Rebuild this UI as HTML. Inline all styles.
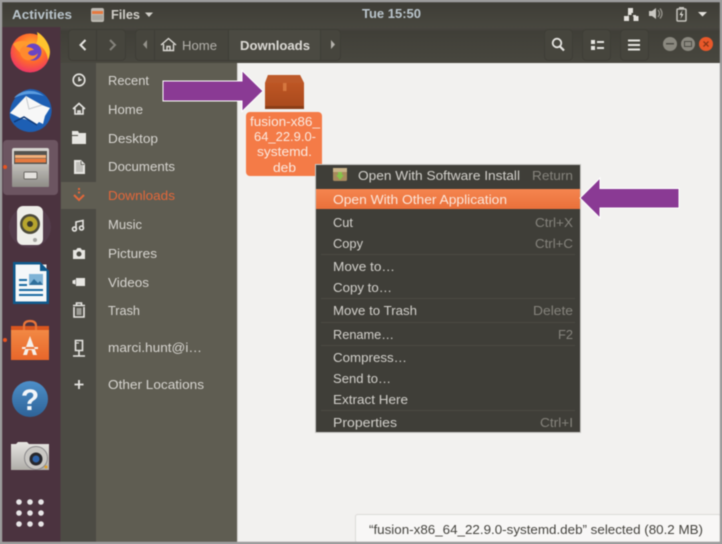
<!DOCTYPE html>
<html><head><meta charset="utf-8"><style>
html,body{margin:0;padding:0;width:722px;height:544px;overflow:hidden;background:#9c9c9c}
svg{display:block;filter:blur(.45px)}
text{font-family:"Liberation Sans",sans-serif;font-size:13px}
.s{fill:#d6d4cf}.m{fill:#d2d0cb}.k{fill:#85837c}
.i{fill:#e6e5e1;stroke:none}.l{fill:none;stroke:#e6e5e1;stroke-width:1.600}
</style></head><body>
<svg width="722" height="544" viewBox="0 0 722 544" xmlns="http://www.w3.org/2000/svg">
<defs>
<linearGradient id="top" x1="0" y1="0" x2="0" y2="1"><stop offset="0" stop-color="#3e3d36"/><stop offset=".42" stop-color="#48473f"/><stop offset=".48" stop-color="#403f38"/><stop offset="1" stop-color="#48473f"/></linearGradient>
<linearGradient id="hl" x1="0" y1="0" x2="0" y2="1"><stop offset="0" stop-color="#f5854f"/><stop offset="1" stop-color="#e9703a"/></linearGradient>
<linearGradient id="box" x1="0" y1="0" x2="0" y2="1"><stop offset="0" stop-color="#c45a26"/><stop offset="1" stop-color="#a8491d"/></linearGradient>
<radialGradient id="ff" cx=".55" cy=".35" r=".75"><stop offset="0" stop-color="#ffbd2e"/><stop offset=".5" stop-color="#ff6a2b"/><stop offset="1" stop-color="#e8257a"/></radialGradient>
<linearGradient id="bl" x1="0" y1="0" x2="0" y2="1"><stop offset="0" stop-color="#4d8fc9"/><stop offset="1" stop-color="#2e6398"/></linearGradient>
<linearGradient id="org" x1="0" y1="0" x2="0" y2="1"><stop offset="0" stop-color="#f28a45"/><stop offset="1" stop-color="#e8662a"/></linearGradient>
<linearGradient id="gr" x1="0" y1="0" x2="0" y2="1"><stop offset="0" stop-color="#e8e6e2"/><stop offset="1" stop-color="#b0aea8"/></linearGradient>
<linearGradient id="dr" x1="0" y1="0" x2="0" y2="1"><stop offset="0" stop-color="#c2c0bb"/><stop offset="1" stop-color="#8e8c87"/></linearGradient>
</defs>

<rect width="722" height="544" fill="#9c9c9c"/>
<rect x="2" y="2" width="718" height="540" fill="#f2f1ef"/>

<rect x="2" y="2" width="718" height="61" fill="url(#top)"/>
<text x="12" y="19" fill="#b9c4cb" textLength="60" lengthAdjust="spacingAndGlyphs" font-weight="bold">Activities</text>
<rect x="91" y="8" width="13" height="14" rx="2" fill="#bdbab3"/><rect x="92" y="11" width="11" height="3" fill="#e5793f"/><rect x="92" y="15" width="11" height="5" fill="#a8a59e"/>
<text x="111" y="19" fill="#d0cec8" textLength="29" lengthAdjust="spacingAndGlyphs" font-weight="bold">Files</text>
<path d="M145 12.500h8l-4 4.500z" fill="#d0cec8"/>
<text x="362" y="18" fill="#b9c4cb" textLength="59" lengthAdjust="spacingAndGlyphs" font-weight="bold">Tue 15:50</text>
<!-- tray -->
<path d="M628 8h5v5h-1.500v2H636v1.500h-3V15h-4.500v1.500H628V15h-0v-2zM624 16h5v5h-5zM633.500 16h5v5h-5z" fill="#e3e1dc"/>
<path d="M649 11h3l4-3v11l-4-3h-3z" fill="#c9c7c1"/><path d="M658 10q3 3.500 0 7M660 8.500q4 5 0 10" fill="none" stroke="#9a9890" stroke-width="1.200"/>
<rect x="677" y="9" width="9" height="12" rx="1" fill="none" stroke="#c5c3bd" stroke-width="1.500"/><rect x="679" y="7" width="5" height="2" fill="#c5c3bd"/><path d="M682.500 10l-3 5h2l-1 4 3-5h-2z" fill="#e3e1dc"/>
<path d="M698 12h9l-4.500 4.500z" fill="#e3e1dc"/>

<!-- nav buttons -->
<g stroke="#3e3d36" fill="#46453d">
<rect x="68.500" y="29.500" width="57" height="31" rx="4"/>
<rect x="135.500" y="29.500" width="205" height="31" rx="4"/>
<rect x="544.500" y="29.500" width="28" height="31" rx="4"/>
<rect x="582.500" y="29.500" width="28" height="31" rx="4"/>
<rect x="620.500" y="29.500" width="28" height="31" rx="4"/>
</g>
<path d="M96.500 30v30M154.500 30v30" stroke="#3e3d36"/>
<rect x="229" y="30" width="92" height="30" fill="#4b4a42"/><path d="M228.500 30v30M320.500 30v30" stroke="#3e3d36"/>
<path d="M85.500 40l-5 5 5 5" fill="none" stroke="#e6e5e1" stroke-width="2"/>
<path d="M110 40l5 5-5 5" fill="none" stroke="#84827b" stroke-width="2"/>
<path d="M147 40v9l-4-4.500z" fill="#94928b"/>
<path d="M331 40v9l4-4.500z" fill="#b5b3ad"/>
<path d="M161 45l7.500-6.500 7.500 6.500M163.500 44v6.500h10V44M167 50.500v-4h3v4" fill="none" stroke="#dbd9d4" stroke-width="1.400"/>
<text x="182" y="50" fill="#b3b1ab" textLength="35" lengthAdjust="spacingAndGlyphs">Home</text>
<text x="240" y="50" fill="#dcdad5" textLength="70" lengthAdjust="spacingAndGlyphs" font-weight="bold">Downloads</text>
<circle cx="557" cy="43" r="4.300" fill="none" stroke="#e6e5e1" stroke-width="1.800"/><path d="M560 46.500l4 4" stroke="#e6e5e1" stroke-width="2.200"/>
<path d="M591 40h4v4h-4zM591 46h4v4h-4zM597 41h7v2h-7zM597 47h7v2h-7z" fill="#e6e5e1"/>
<path d="M628 39.500h12v2h-12zM628 44h12v2h-12zM628 48.500h12v2h-12z" fill="#e6e5e1"/>
<circle cx="670" cy="44" r="7" fill="#8a887f"/><rect x="666" y="43" width="8" height="1.500" fill="#4d4c45"/>
<circle cx="688" cy="44" r="7" fill="#8a887f"/><rect x="684.500" y="41.500" width="7" height="5" fill="none" stroke="#4d4c45"/>
<circle cx="706" cy="44" r="7" fill="#e8582a"/><path d="M703.500 41.500l5 5M708.500 41.500l-5 5" stroke="#8a3515" stroke-width="1.300"/>

<!-- dock -->
<rect x="2" y="27" width="58.500" height="515" fill="#4b333f"/>
<rect x="3" y="140" width="55" height="55" rx="4" fill="#6c5561"/>
<circle cx="5" cy="167" r="2" fill="#e95420"/><circle cx="5" cy="340" r="2" fill="#e95420"/>

<!-- firefox -->
<circle cx="30" cy="53" r="19.500" fill="url(#ff)"/>
<path d="M37 32c6 3 13 12 13 20 0 3-1 6-2 8-1-8-5-14-12-16 2-4 2-8 1-12z" fill="#ffc42e"/>
<path d="M13 44c5-4 12-4 17-1-4 1-7 2-8 5 5-2 12 0 13 4-4-1-9 0-13 2-3-2-6-5-9-10z" fill="#ff9a2e"/>
<circle cx="33" cy="52" r="8.500" fill="#6a45c4"/>
<path d="M21 48c5-2 11-1 13 2-3 0-5 1-6 3 2 4 8 3 10 0-1 6-9 9-14 6-4-3-5-8-3-11z" fill="#ff8a2e"/>

<!-- thunderbird -->
<path d="M30 89a21.500 21.500 0 1 1-20 29c-2-12 6-27 20-29z" fill="#1d5fb4"/>
<path d="M14 98c6-8 20-10 30-2-9-3-20-3-30 2z" fill="#5b9ce0"/>
<path d="M10 113l16-17 16 9 8 3-5 8-2 8-4-2-3 3-8-5-8-2z" fill="#f7f7f7"/>
<path d="M26 96l3 13 13-4" fill="none" stroke="#c5c8cc" stroke-width="1"/>
<path d="M14 122l10-5 13 8" fill="none" stroke="#0f3a78" stroke-width="1.500"/>

<!-- files drawer -->
<rect x="12" y="148" width="37" height="39" rx="2" fill="#d6d4d0"/>
<rect x="14" y="151" width="33" height="14" fill="#55534e"/>
<rect x="15" y="155" width="31" height="3" fill="#f3b07a"/><rect x="15" y="158.500" width="31" height="4" fill="#e5793f"/>
<rect x="12" y="164" width="37" height="23" rx="1" fill="url(#dr)"/>
<rect x="24" y="172" width="13" height="7" rx="1" fill="#e4e2de" stroke="#6a6863"/>

<!-- speakers -->
<circle cx="30" cy="227" r="21" fill="#5f4a60" opacity=".4"/>
<rect x="17" y="206" width="26" height="39" rx="6" fill="#eeeee9"/>
<circle cx="30" cy="224" r="10" fill="#4c4a3a"/><circle cx="30" cy="224" r="7.500" fill="#b7a52e"/><circle cx="30" cy="224" r="3" fill="#3a3828"/>
<circle cx="35" cy="240" r="2" fill="#a5a5a0"/>

<!-- writer -->
<path d="M13 262h27l9 9v33H13z" fill="#0f5a8d"/>
<rect x="15.500" y="264.500" width="31" height="37" fill="#f4f7f9"/>
<path d="M40 262l9 9h-9z" fill="#0f5a8d"/>
<path d="M19 279h8v2h-8zM19 284h8v2h-8zM19 289h24v2h-24zM19 294h24v2h-24z" fill="#1a6aa3"/>
<rect x="29" y="274" width="14" height="11" fill="#7fb3d6"/><path d="M29 285l5-6 4 4 2-2 3 4z" fill="#2f6f9c"/>

<!-- store -->
<rect x="11" y="329" width="38" height="31" fill="url(#org)"/>
<rect x="11" y="326" width="38" height="4" fill="#d9561f"/>
<path d="M24 330v-4q0-5 6-5t6 5v4" fill="none" stroke="#e9753a" stroke-width="2.200"/>
<path d="M30 336l-7 19h4l1.500-5h3l1.500 5h4zM22 347h16v2H22z" fill="#f6f0ea"/>

<!-- help -->
<circle cx="30" cy="399" r="18" fill="url(#bl)"/>
<text x="30" y="410" text-anchor="middle" fill="#f3f6f9" font-weight="bold" style="font-size:30px">?</text>

<!-- camera -->
<path d="M11 444h5l2-2h9l2 2h20v26H11z" fill="url(#gr)"/>
<circle cx="36" cy="458" r="11.500" fill="#c9c7c3" stroke="#8a888a"/><circle cx="36" cy="459" r="6.500" fill="#27272c"/><circle cx="36" cy="459" r="3.500" fill="#2d62a8"/>
<circle cx="46" cy="467" r="1.500" fill="#e3a126"/>

<!-- grid -->
<g fill="#e7e5e6">
<circle cx="19" cy="502" r="2.800"/><circle cx="30" cy="502" r="2.800"/><circle cx="41" cy="502" r="2.800"/>
<circle cx="19" cy="513" r="2.800"/><circle cx="30" cy="513" r="2.800"/><circle cx="41" cy="513" r="2.800"/>
<circle cx="19" cy="524" r="2.800"/><circle cx="30" cy="524" r="2.800"/><circle cx="41" cy="524" r="2.800"/>
</g>

<!-- sidebar -->
<rect x="60.500" y="63" width="36" height="479" fill="#4c4b44"/>
<rect x="96" y="63" width="141" height="479" fill="#5f5d52"/>
<rect x="237" y="63" width="1" height="479" fill="#d8d7d3"/>
<rect x="61" y="182" width="176" height="27" fill="#5f5d52"/>

<text class="s" x="108" y="85" textLength="41" lengthAdjust="spacingAndGlyphs">Recent</text>
<text class="s" x="108" y="114" textLength="35" lengthAdjust="spacingAndGlyphs">Home</text>
<text class="s" x="108" y="143" textLength="50" lengthAdjust="spacingAndGlyphs">Desktop</text>
<text class="s" x="108" y="171" textLength="67" lengthAdjust="spacingAndGlyphs">Documents</text>
<text x="108" y="200" fill="#e2673a" textLength="67" lengthAdjust="spacingAndGlyphs">Downloads</text>
<text class="s" x="108" y="229" textLength="34" lengthAdjust="spacingAndGlyphs">Music</text>
<text class="s" x="108" y="258" textLength="49" lengthAdjust="spacingAndGlyphs">Pictures</text>
<text class="s" x="108" y="287" textLength="41" lengthAdjust="spacingAndGlyphs">Videos</text>
<text class="s" x="108" y="315" textLength="32" lengthAdjust="spacingAndGlyphs">Trash</text>
<text class="s" x="108" y="352" textLength="94" lengthAdjust="spacingAndGlyphs">marci.hunt@i…</text>
<text class="s" x="108" y="389" textLength="96" lengthAdjust="spacingAndGlyphs">Other Locations</text>

<!-- sidebar icons -->
<circle class="l" cx="79" cy="80" r="5.800"/><path class="l" d="M79 77v3.500l2.500-1"/>
<path class="l" d="M73 109l6-5.500 6 5.500M75 108v6h8v-6M78 114v-3h2v3"/>
<path class="i" d="M72 131h6l1 2h7v11H72z"/><path d="M72 135.500h6" stroke="#4c4b44"/>
<path class="i" d="M74 160h7l4 4v10H74z"/><path d="M76 162h4v3h3v7h-7z" fill="#4c4b44" opacity=".25"/><path d="M81 161v3.500h3.500" fill="none" stroke="#4c4b44" stroke-width=".8"/>
<path d="M79 188v2M79 191.500v2M74 195l5 5 5-5" fill="none" stroke="#e2673a" stroke-width="2"/>
<path class="l" d="M76 229v-7l7-1.500v7"/><circle class="l" cx="74.500" cy="229" r="2"/><circle class="l" cx="81.500" cy="228" r="2"/>
<path class="i" d="M73 250h3l1.500-2h3l1.500 2h3v9H73z"/><circle cx="79" cy="254" r="2.500" fill="#4c4b44"/>
<path class="i" d="M76 278h9v8h-9zM72.500 280.500l3-1v5l-3-1z"/>
<path class="l" d="M74 307v10h10v-10M73 305.500h12M76.500 305v-2h5v2"/><rect x="76.500" y="308" width="5" height="7" fill="#9c9b95"/>
<path class="l" d="M75.500 340.500h7v10h-7zM73 356h12M79 350.500v5"/><path d="M76 343h3" stroke="#e6e5e1"/>
<path d="M79 380v9M74.500 384.500h9" stroke="#e6e5e1" stroke-width="1.800"/>

<!-- file icon + label -->
<rect x="246" y="112" width="76" height="64" rx="4" fill="#f47b47"/>
<path d="M268 75h32l4 8v25h-39V83z" fill="url(#box)"/>
<path d="M268 75h32l4 8h-39z" fill="#bd5a2a"/>
<rect x="283" y="83" width="3.500" height="8" fill="#d5773f"/>
<rect x="265" y="106" width="39" height="3" fill="#8a3d17"/>
<g fill="#fbe9df">
<text x="250" y="126" textLength="70" lengthAdjust="spacingAndGlyphs">fusion-x86_</text>
<text x="254" y="141" textLength="62" lengthAdjust="spacingAndGlyphs">64_22.9.0-</text>
<text x="257" y="156" textLength="55" lengthAdjust="spacingAndGlyphs">systemd.</text>
<text x="273" y="172" textLength="23" lengthAdjust="spacingAndGlyphs">deb</text>
</g>

<!-- menu -->
<rect x="315.500" y="164.500" width="265" height="268" fill="#3f3e38" stroke="#c9c8c4"/>
<rect x="316" y="189" width="264" height="20" fill="url(#hl)"/>
<path d="M321 254.500h254M321 298.500h254M321 322.500h254M321 345.500h254M321 410.500h254" stroke="#4b4a43"/>
<rect x="333" y="168" width="14" height="13" rx="1.500" fill="#a88a5e"/><rect x="333" y="168" width="14" height="4" fill="#cbb48a"/><path d="M338 172h4v3h2l-4 5-4-5h2z" fill="#86c24a"/>
<text class="m" x="358" y="180" textLength="162" lengthAdjust="spacingAndGlyphs">Open With Software Install</text>
<text class="k" x="532" y="180" textLength="41" lengthAdjust="spacingAndGlyphs">Return</text>
<text x="333" y="204" fill="#fbe6da" textLength="174" lengthAdjust="spacingAndGlyphs">Open With Other Application</text>
<text class="m" x="333" y="227" textLength="20" lengthAdjust="spacingAndGlyphs">Cut</text>
<text class="k" x="535" y="227" textLength="38" lengthAdjust="spacingAndGlyphs">Ctrl+X</text>
<text class="m" x="333" y="248" textLength="30" lengthAdjust="spacingAndGlyphs">Copy</text>
<text class="k" x="535" y="248" textLength="38" lengthAdjust="spacingAndGlyphs">Ctrl+C</text>
<text class="m" x="333" y="271" textLength="62" lengthAdjust="spacingAndGlyphs">Move to…</text>
<text class="m" x="333" y="292" textLength="59" lengthAdjust="spacingAndGlyphs">Copy to…</text>
<text class="m" x="333" y="315" textLength="84" lengthAdjust="spacingAndGlyphs">Move to Trash</text>
<text class="k" x="533" y="315" textLength="40" lengthAdjust="spacingAndGlyphs">Delete</text>
<text class="m" x="333" y="339" textLength="61" lengthAdjust="spacingAndGlyphs">Rename…</text>
<text class="k" x="558" y="339" textLength="15" lengthAdjust="spacingAndGlyphs">F2</text>
<text class="m" x="333" y="362" textLength="74" lengthAdjust="spacingAndGlyphs">Compress…</text>
<text class="m" x="333" y="383" textLength="58" lengthAdjust="spacingAndGlyphs">Send to…</text>
<text class="m" x="333" y="404" textLength="75" lengthAdjust="spacingAndGlyphs">Extract Here</text>
<text class="m" x="333" y="427" textLength="64" lengthAdjust="spacingAndGlyphs">Properties</text>
<text class="k" x="540" y="427" textLength="33" lengthAdjust="spacingAndGlyphs">Ctrl+I</text>

<!-- arrows -->
<path d="M163 81h79V70.500L263 91l-21 20.500V101h-79z" fill="#8a3a94" stroke="#fff" stroke-width="1"/>
<path d="M679 188.500h-79V178l-20 20 20 20v-10h79z" fill="#8a3a94" stroke="#fff" stroke-width="1"/>

<!-- status -->
<rect x="355.500" y="514.500" width="365" height="28" rx="2" fill="#f8f7f6" stroke="#dcdbd8"/>
<text x="369" y="534" fill="#45443f" textLength="334" lengthAdjust="spacingAndGlyphs">“fusion-x86_64_22.9.0-systemd.deb” selected  (80.2 MB)</text>

<path d="M0 1h722M1 0v544M721 0v544M0 543h722" stroke="#9c9c9c" stroke-width="2.400" fill="none"/>
</svg>
</body></html>
